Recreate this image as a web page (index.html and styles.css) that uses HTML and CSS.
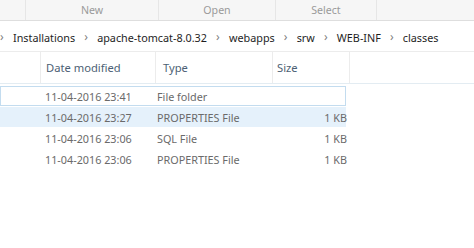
FILE: index.html
```html
<!DOCTYPE html>
<html>
<head>
<meta charset="utf-8">
<link rel="stylesheet" href="styles.css">
</head>
<body>
<div class="ribbon">
  <div class="rcell rfirst"></div>
  <div class="rcell rnew">New</div>
  <div class="rcell ropen">Open</div>
  <div class="rcell rsel">Select</div>
  <div class="rcell rlast"></div>
</div>
<div class="address">
  <span class="chev">&#x203A;</span><span class="crumb">Installations</span>
  <span class="chev">&#x203A;</span><span class="crumb">apache-tomcat-8.0.32</span>
  <span class="chev">&#x203A;</span><span class="crumb">webapps</span>
  <span class="chev">&#x203A;</span><span class="crumb">srw</span>
  <span class="chev">&#x203A;</span><span class="crumb">WEB-INF</span>
  <span class="chev">&#x203A;</span><span class="crumb">classes</span>
</div>
<div class="list">
  <div class="hdr">
    <div class="c0"></div>
    <div class="c1 hcell">Date modified</div>
    <div class="c2 hcell">Type</div>
    <div class="c3 hcell">Size</div>
  </div>
  <div class="row focus">
    <div class="c0"></div>
    <div class="c1">11-04-2016 23:41</div>
    <div class="c2">File folder</div>
    <div class="c3"></div>
  </div>
  <div class="row sel">
    <div class="c0"></div>
    <div class="c1">11-04-2016 23:27</div>
    <div class="c2">PROPERTIES File</div>
    <div class="c3">1 KB</div>
  </div>
  <div class="row">
    <div class="c0"></div>
    <div class="c1">11-04-2016 23:06</div>
    <div class="c2">SQL File</div>
    <div class="c3">1 KB</div>
  </div>
  <div class="row">
    <div class="c0"></div>
    <div class="c1">11-04-2016 23:06</div>
    <div class="c2">PROPERTIES File</div>
    <div class="c3">1 KB</div>
  </div>
</div>
</body>
</html>
```
FILE: styles.css
```css
html, body {
  margin: 0;
  padding: 0;
  background: #ffffff;
  width: 474px;
  height: 248px;
  overflow: hidden;
  font-family: "Noto Sans", "Open Sans", sans-serif;
  font-size: 10.8px;
}
.ribbon {
  display: grid;
  grid-template-columns: 26px 133px 117px 101px 1fr;
  height: 20px;
  background: #f6f6f6;
  border-bottom: 1px solid #dedede;
}
.rcell {
  border-right: 1px solid #e6e6e6;
  color: #9a9a9a;
  font-size: 10.6px;
  display: flex;
  align-items: center;
  justify-content: center;
  line-height: 1;
}
.rlast { border-right: none; }
.address {
  display: flex;
  align-items: center;
  height: 28px;
  margin-top: 2px;
  border-bottom: 1px solid #ececec;
  color: #1e1e1e;
  white-space: nowrap;
  font-size: 10.8px;
}
.chev {
  color: #808080;
  font-size: 12px;
  width: 22px;
  text-align: center;
  margin-bottom: 1px;
}
.chev:first-child {
  width: 4px;
  margin-right: 9px;
  text-align: left;
}
.crumb { margin: 0; }
.hdr, .row {
  display: grid;
  grid-template-columns: 40px 115px 117px 78px;
  align-items: stretch;
}
.hdr {
  height: 31px;
  border-bottom: 1px solid #e3ecf2;
  color: #4c5f74;
  font-size: 11.2px;
}
.hcell {
  border-left: 1px solid #ececec;
  display: flex;
  align-items: center;
  padding-left: 5px;
}
.hdr .c2 { padding-left: 7px; }
.hdr .c3 { border-right: 1px solid #ececec; padding-left: 4px; }
.row {
  height: 20px;
  margin-top: 1px;
  color: #6a6a6a;
  width: 346px;
  box-sizing: border-box;
}
.row > div {
  display: flex;
  align-items: center;
}
.row .c1 { padding-left: 5px; }
.row .c2 { padding-left: 2px; }
.row .c3 { justify-content: flex-end; padding-right: 3px; }
.row.focus {
  border: 1px solid #c3dcef;
  margin-top: 2px;
}
.row.focus .c1 { padding-left: 4px; }
.row.focus .c2 { padding-left: 1px; }
.row.sel { background: #e5f1fb; }
```
